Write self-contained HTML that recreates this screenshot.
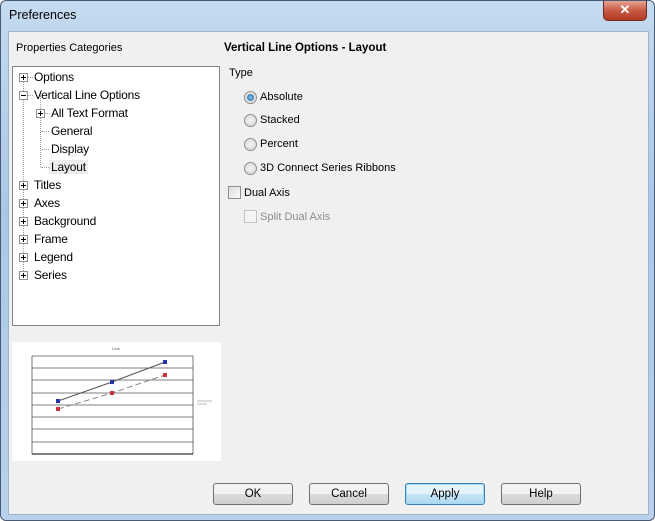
<!DOCTYPE html>
<html><head><style>
body{margin:0;width:655px;height:521px;overflow:hidden;font-family:"Liberation Sans",sans-serif;font-size:12px;color:#000;}
.frame{position:absolute;left:0;top:0;width:653px;height:519px;border:1px solid #4a5a70;border-radius:6px;background:linear-gradient(180deg,#c4daf0 0%,#a9c8e8 40%,#b9d1ec 100%);}
.client{position:absolute;left:7px;top:30px;width:639px;height:482px;background:#f0f0f0;border:1px solid #9fb3cb;}
.title{position:absolute;left:8px;top:7px;font-size:12.5px;}
.close{position:absolute;left:602px;top:0;width:42px;height:19px;border:1px solid #6b2a22;border-top:none;border-radius:0 0 5px 5px;background:linear-gradient(#e8a293,#c75a45 50%,#b23a22);color:#fff;font-weight:bold;text-align:center;line-height:18px;font-size:13px;}
.abs{position:absolute;white-space:nowrap;}
.r{font-size:11px;}
.tree{position:absolute;left:12px;top:66px;width:206px;height:258px;background:#fff;border:1px solid #828790;}
.exp{position:absolute;width:7px;height:7px;border:1px solid #919191;background:#fff;}
.exp:before{content:"";position:absolute;left:1px;top:3px;width:5px;height:1px;background:#000;}
.exp.p:after{content:"";position:absolute;left:3px;top:1px;width:1px;height:5px;background:#000;}
.dh{position:absolute;height:0;border-top:1px dotted #a0a0a0;}
.dv{position:absolute;width:0;border-left:1px dotted #a0a0a0;}
.ti{position:absolute;font-size:12px;letter-spacing:-0.2px;}
.radio{position:absolute;width:11px;height:11px;border-radius:50%;border:1px solid #8e8f8f;background:radial-gradient(#f4f4f4,#d4d4d4);}
.radio.on:after{content:"";position:absolute;left:2px;top:2px;width:7px;height:7px;border-radius:50%;background:radial-gradient(#7dc3f0,#1a5c9a);}
.cb{position:absolute;width:11px;height:11px;border:1px solid #8e8f8f;background:linear-gradient(135deg,#dcdcdc,#fafafa);}
.btn{position:absolute;top:483px;width:78px;height:20px;border:1px solid #707070;border-radius:3px;background:linear-gradient(#f2f2f2 50%,#dcdcdc 50%,#cfcfcf);text-align:center;line-height:20px;font-size:11.5px;}
.btn.def{border-color:#3c7fb1;background:linear-gradient(#e5f4fc 50%,#c4e5f6 50%,#b0d8ef);box-shadow:inset 0 0 0 1px #9edcf8;}
</style></head><body>
<div class="frame">
<div class="title">Preferences</div>
<div class="close">✕</div>
<div class="client"></div>
</div>
<div class="abs r" style="left:16px;top:42px;">Properties Categories</div>
<div class="abs" style="left:224px;top:42px;font-weight:bold;font-size:11.5px;">Vertical Line Options - Layout</div>
<div class="tree">
 <div class="dv" style="left:10px;top:10px;height:200px;"></div>
 <div class="dv" style="left:27px;top:28px;height:72px;"></div>
 <div class="exp p" style="left:6px;top:6px;"></div><div class="dh" style="left:15px;top:10px;width:5px;"></div><div class="ti" style="left:21px;top:3px;">Options</div>
 <div class="exp" style="left:6px;top:24px;"></div><div class="dh" style="left:15px;top:28px;width:5px;"></div><div class="ti" style="left:21px;top:21px;">Vertical Line Options</div>
 <div class="exp p" style="left:23px;top:42px;"></div><div class="dh" style="left:32px;top:46px;width:5px;"></div><div class="ti" style="left:38px;top:39px;">All Text Format</div>
 <div class="dh" style="left:28px;top:64px;width:8px;"></div><div class="ti" style="left:38px;top:57px;">General</div>
 <div class="dh" style="left:28px;top:82px;width:8px;"></div><div class="ti" style="left:38px;top:75px;">Display</div>
 <div class="dh" style="left:28px;top:100px;width:8px;"></div><div class="ti" style="left:36px;top:93px;background:#ececec;padding:0 2px;">Layout</div>
 <div class="exp p" style="left:6px;top:114px;"></div><div class="ti" style="left:21px;top:111px;">Titles</div>
 <div class="exp p" style="left:6px;top:132px;"></div><div class="ti" style="left:21px;top:129px;">Axes</div>
 <div class="exp p" style="left:6px;top:150px;"></div><div class="ti" style="left:21px;top:147px;">Background</div>
 <div class="exp p" style="left:6px;top:168px;"></div><div class="ti" style="left:21px;top:165px;">Frame</div>
 <div class="exp p" style="left:6px;top:186px;"></div><div class="ti" style="left:21px;top:183px;">Legend</div>
 <div class="exp p" style="left:6px;top:204px;"></div><div class="ti" style="left:21px;top:201px;">Series</div>
</div>
<svg class="abs" style="left:12px;top:342px;" width="209" height="119">
<rect width="209" height="119" fill="#fff"/>
<text x="104" y="8" font-size="4" text-anchor="middle" fill="#555">Line</text>
<g stroke="#555" stroke-width="0.8"><line x1="20" y1="14" x2="20" y2="112"/><line x1="181" y1="14" x2="181" y2="112"/>
<line x1="20" y1="14" x2="181" y2="14"/><line x1="20" y1="26" x2="181" y2="26"/><line x1="20" y1="38" x2="181" y2="38"/><line x1="20" y1="51" x2="181" y2="51"/><line x1="20" y1="63" x2="181" y2="63"/><line x1="20" y1="75" x2="181" y2="75"/><line x1="20" y1="87" x2="181" y2="87"/><line x1="20" y1="100" x2="181" y2="100"/><line x1="20" y1="112" x2="181" y2="112" stroke="#000" stroke-width="1"/></g>
<polyline points="46,59 100,40 153,20" fill="none" stroke="#555" stroke-width="1"/>
<polyline points="46,67 100,51 153,33" fill="none" stroke="#888" stroke-width="1" stroke-dasharray="6,3"/>
<rect x="44" y="57" width="4" height="4" fill="#2233aa"/><rect x="98" y="38" width="4" height="4" fill="#2233aa"/><rect x="151" y="18" width="4" height="4" fill="#2233aa"/>
<rect x="44" y="65" width="4" height="4" fill="#cc3333"/><rect x="98" y="49" width="4" height="4" fill="#cc3333"/><rect x="151" y="31" width="4" height="4" fill="#cc3333"/>
<line x1="185" y1="59" x2="200" y2="59" stroke="#888" stroke-width="0.6"/><line x1="185" y1="62" x2="195" y2="62" stroke="#888" stroke-width="0.6"/>
</svg>
<div class="abs r" style="left:229px;top:67px;">Type</div>
<div class="radio on" style="left:244px;top:91px;"></div><div class="abs r" style="left:260px;top:91px;">Absolute</div>
<div class="radio" style="left:244px;top:114px;"></div><div class="abs r" style="left:260px;top:114px;">Stacked</div>
<div class="radio" style="left:244px;top:138px;"></div><div class="abs r" style="left:260px;top:138px;">Percent</div>
<div class="radio" style="left:244px;top:162px;"></div><div class="abs r" style="left:260px;top:162px;">3D Connect Series Ribbons</div>
<div class="cb" style="left:228px;top:186px;"></div><div class="abs r" style="left:244px;top:187px;">Dual Axis</div>
<div class="cb" style="left:244px;top:210px;border-color:#c4c4c4;background:#f4f4f4;"></div><div class="abs r" style="left:260px;top:211px;color:#8d8d8d;">Split Dual Axis</div>
<div class="btn" style="left:213px;">OK</div>
<div class="btn" style="left:309px;">Cancel</div>
<div class="btn def" style="left:405px;">Apply</div>
<div class="btn" style="left:501px;">Help</div>
</body></html>
